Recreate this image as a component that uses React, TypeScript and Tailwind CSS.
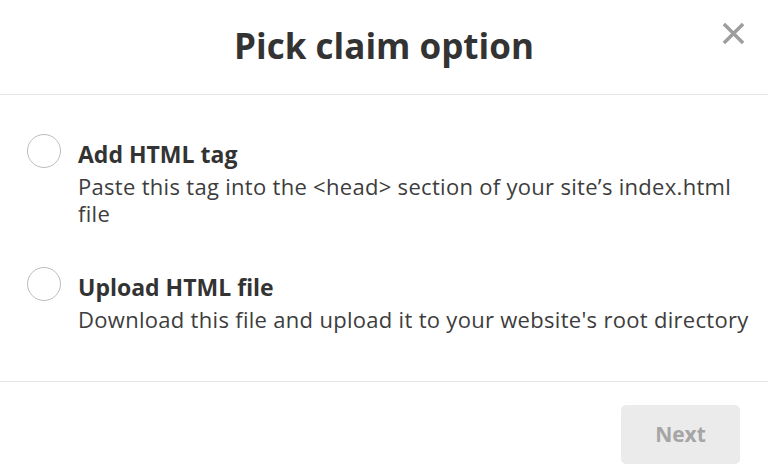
const options = [
  {
    id: "tag",
    title: "Add HTML tag",
    about: "Paste this tag into the <head> section of your site’s index.html file",
  },
  {
    id: "file",
    title: "Upload HTML file",
    about: "Download this file and upload it to your website's root directory",
  },
];

const CloseIcon = () => (
  <svg viewBox="0 0 24 24" className="w-[23px] h-[23px]" fill="none">
    <path d="M2 2L22 22M22 2L2 22" stroke="#9e9e9e" strokeWidth="3.6" strokeLinecap="butt" />
  </svg>
);

export default function App() {
  return (
    <div className="w-[768px] h-[476px] bg-white flex flex-col font-['Open_Sans',sans-serif] text-[#333]">
      <div className="relative h-[95px] shrink-0 border-b border-[#e6e6e6] flex items-center justify-center">
        <h1 className="text-[35px] font-bold leading-none text-[#333] pb-[3px]">Pick claim option</h1>
        <button className="absolute right-[23px] top-[22px]">
          <CloseIcon />
        </button>
      </div>

      <div className="flex-1 pt-[39px] pl-[27px] pr-[8px] flex flex-col gap-[40px]">
        {options.map(({ id, title, about }) => (
          <label key={id} className="flex items-start gap-[17px] cursor-pointer">
            <span className="w-[34px] h-[34px] rounded-full border border-[#bdbdbd] shrink-0" />
            <div className="mt-[2px]">
              <div className="text-[23px] font-bold leading-[36px] text-[#333]">{title}</div>
              <div className="mt-[1px] text-[22px] tracking-[0.3px] leading-[27px] text-[#3d3d3d]">{about}</div>
            </div>
          </label>
        ))}
      </div>

      <div className="h-[95px] shrink-0 border-t border-[#e6e6e6] flex items-start justify-end pt-[23px] pr-[28px]">
        <button className="w-[119px] h-[59px] rounded-[5px] bg-[#ebebeb] text-[21px] font-bold text-[#a5a5a5]">
          Next
        </button>
      </div>
    </div>
  );
}
